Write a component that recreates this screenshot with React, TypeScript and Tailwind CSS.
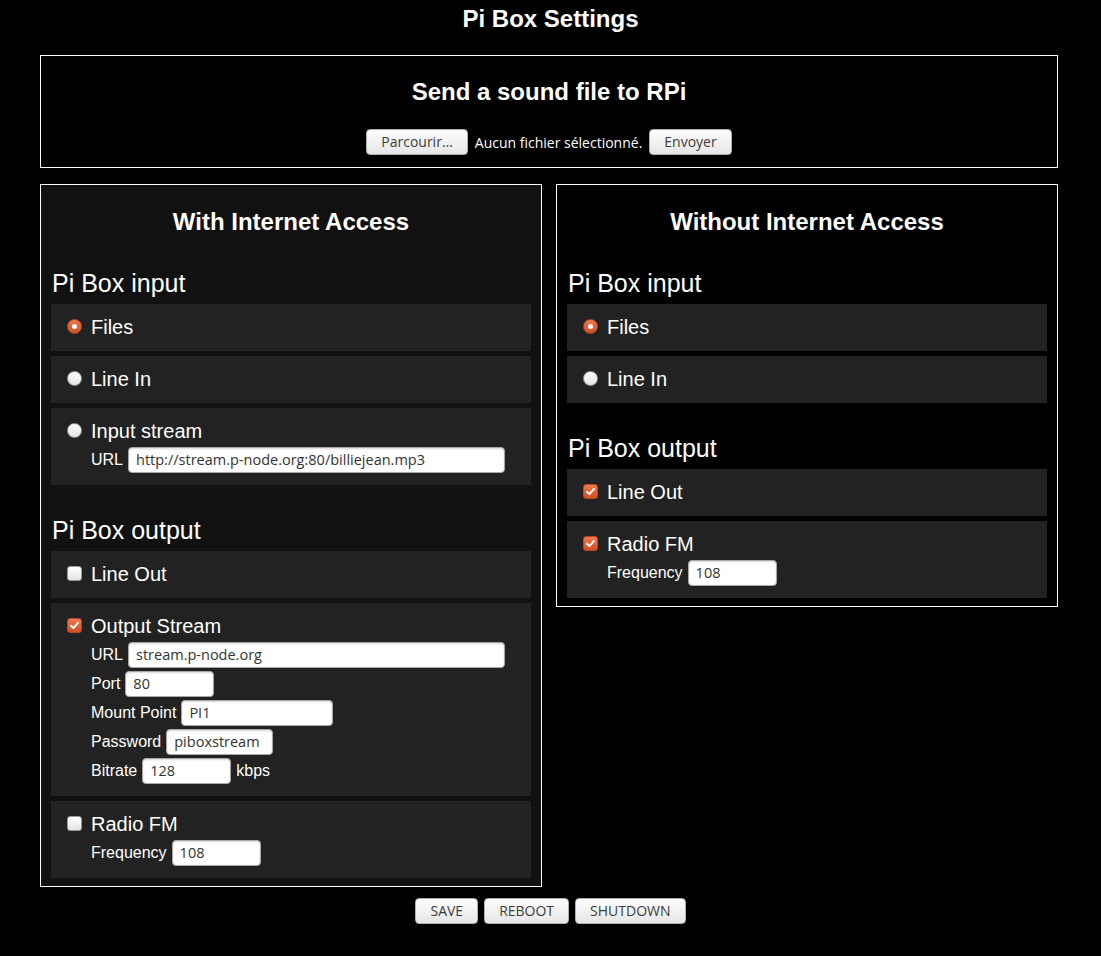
import React from "react";

const ui = "font-['Open_Sans',sans-serif]";

function Radio({ checked }: { checked?: boolean }) {
  return checked ? (
    <span className="flex h-[15px] w-[15px] shrink-0 items-center justify-center rounded-full border border-[#b8471f] bg-linear-to-b from-[#ec7a50] to-[#d04f22]">
      <span className="block h-[5px] w-[5px] rounded-full bg-white" />
    </span>
  ) : (
    <span className="block h-[15px] w-[15px] shrink-0 rounded-full border border-[#9a9a9a] bg-linear-to-b from-white to-[#e4e4e4]" />
  );
}

function Check({ checked }: { checked?: boolean }) {
  return checked ? (
    <span className="flex h-[15px] w-[15px] shrink-0 items-center justify-center rounded-[3px] border border-[#b8471f] bg-linear-to-b from-[#ec7a50] to-[#d04f22]">
      <svg viewBox="0 0 12 12" className="h-[11px] w-[11px]">
        <path d="M2.2 6.3 L4.9 8.9 L9.8 3.2" fill="none" stroke="white" strokeWidth="2" strokeLinecap="round" strokeLinejoin="round" />
      </svg>
    </span>
  ) : (
    <span className="block h-[15px] w-[15px] shrink-0 rounded-[3px] border border-[#9a9a9a] bg-linear-to-b from-white to-[#e4e4e4]" />
  );
}

function Field({ label, value, w, after }: { label: string; value: string; w: string; after?: string }) {
  return (
    <div className="flex items-center gap-[5px] text-[16px] leading-[26px]">
      <span>{label}</span>
      <input
        readOnly
        value={value}
        className={`${w} ${ui} h-[26px] rounded-[4px] border border-[#a8a8a8] bg-white px-[7px] text-[14.5px] text-[#333] shadow-[inset_0_1px_2px_rgba(0,0,0,0.15)] outline-none`}
      />
      {after && <span>{after}</span>}
    </div>
  );
}

function Row({ kind, checked, label, children }: { kind: "radio" | "check"; checked?: boolean; label: string; children?: React.ReactNode }) {
  return (
    <div className="bg-[#222] py-[12px] pl-[16px] pr-[10px]">
      <div className="flex h-[23px] items-center gap-[9px] text-[20px] leading-[23px]">
        <span className="-mt-[3px] flex">{kind === "radio" ? <Radio checked={checked} /> : <Check checked={checked} />}</span>
        <span>{label}</span>
      </div>
      {children && <div className="mt-[4px] flex flex-col gap-[3px] pl-[24px]">{children}</div>}
    </div>
  );
}

function SectionTitle({ children, first }: { children: React.ReactNode; first?: boolean }) {
  return <h3 className={`${first ? "mt-[33px]" : "mt-[31px]"} mb-[7px] pl-[1px] text-[25px] leading-[28px]`}>{children}</h3>;
}

function Button({ children }: { children: React.ReactNode }) {
  return (
    <button className={`${ui} h-[26px] rounded-[4px] border border-[#b0b0b0] bg-linear-to-b from-[#fdfdfd] to-[#e6e6e6] px-[14px] text-[14px] leading-[24px] text-[#3c3c3c] shadow-[0_1px_1px_rgba(0,0,0,0.2)]`}>
      {children}
    </button>
  );
}

export default function App() {
  return (
    <div className="min-h-[956px] bg-black pb-[30px] font-['Liberation_Sans',Arial,sans-serif] text-white">
      <h1 className="pt-[5px] text-center text-[24px] font-bold leading-[28px]">Pi Box Settings</h1>

      <div className="ml-[40px] mt-[22px] w-[1018px] border border-white pb-[12px] pt-[22px]">
        <h2 className="text-center text-[24px] font-bold leading-[28px]">Send a sound file to RPi</h2>
        <div className="mt-[23px] flex items-center justify-center gap-[7px]">
          <Button>Parcourir…</Button>
          <span className={`${ui} text-[14px]`}>Aucun fichier sélectionné.</span>
          <Button>Envoyer</Button>
        </div>
      </div>

      <div className="ml-[40px] mt-[16px] flex w-[1018px] items-start gap-[14px]">
        <div className="w-[502px] border border-white bg-[#111] px-[10px] pb-[8px] pt-[23px]">
          <h2 className="text-center text-[24px] font-bold leading-[28px]">With Internet Access</h2>
          <SectionTitle first>Pi Box input</SectionTitle>
          <div className="flex flex-col gap-[5px]">
            <Row kind="radio" checked label="Files" />
            <Row kind="radio" label="Line In" />
            <Row kind="radio" label="Input stream">
              <Field label="URL" value="http://stream.p-node.org:80/billiejean.mp3" w="w-[377px]" />
            </Row>
          </div>
          <SectionTitle>Pi Box output</SectionTitle>
          <div className="flex flex-col gap-[5px]">
            <Row kind="check" label="Line Out" />
            <Row kind="check" checked label="Output Stream">
              <Field label="URL" value="stream.p-node.org" w="w-[377px]" />
              <Field label="Port" value="80" w="w-[89px]" />
              <Field label="Mount Point" value="PI1" w="w-[152px]" />
              <Field label="Password" value="piboxstream" w="w-[107px]" />
              <Field label="Bitrate" value="128" w="w-[89px]" after="kbps" />
            </Row>
            <Row kind="check" label="Radio FM">
              <Field label="Frequency" value="108" w="w-[89px]" />
            </Row>
          </div>
        </div>

        <div className="w-[502px] border border-white bg-black px-[10px] pb-[8px] pt-[23px]">
          <h2 className="text-center text-[24px] font-bold leading-[28px]">Without Internet Access</h2>
          <SectionTitle first>Pi Box input</SectionTitle>
          <div className="flex flex-col gap-[5px]">
            <Row kind="radio" checked label="Files" />
            <Row kind="radio" label="Line In" />
          </div>
          <SectionTitle>Pi Box output</SectionTitle>
          <div className="flex flex-col gap-[5px]">
            <Row kind="check" checked label="Line Out" />
            <Row kind="check" checked label="Radio FM">
              <Field label="Frequency" value="108" w="w-[89px]" />
            </Row>
          </div>
        </div>
      </div>

      <div className="mt-[11px] flex justify-center gap-[6px]">
        <Button>SAVE</Button>
        <Button>REBOOT</Button>
        <Button>SHUTDOWN</Button>
      </div>
    </div>
  );
}
